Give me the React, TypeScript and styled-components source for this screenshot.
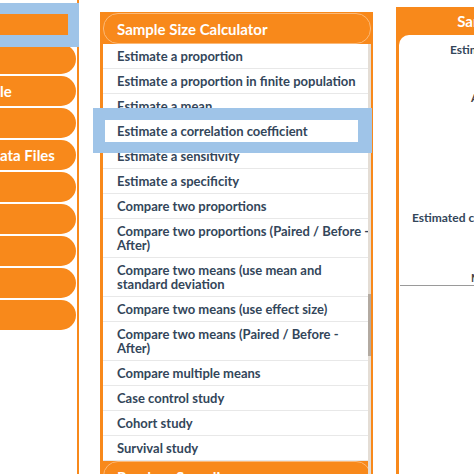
import React from 'react';
import styled, {createGlobalStyle} from 'styled-components';

const ORANGE = '#f8891b';
const INK = '#33465a';
const NOTE_BLUE = '#9fc4e8';

type Row = {label: React.ReactNode};

const rows: Row[] = [
  {label: 'Estimate a proportion'},
  {label: 'Estimate a proportion in finite population'},
  {label: 'Estimate a mean'},
  {label: 'Estimate a correlation coefficient'},
  {label: 'Estimate a sensitivity'},
  {label: 'Estimate a specificity'},
  {label: 'Compare two proportions'},
  {label: <>Compare two proportions (Paired / Before -<br />After)</>},
  {label: <>Compare two means (use mean and<br />standard deviation</>},
  {label: 'Compare two means (use effect size)'},
  {label: <>Compare two means (Paired / Before -<br />After)</>},
  {label: 'Compare multiple means'},
  {label: 'Case control study'},
  {label: 'Cohort study'},
  {label: 'Survival study'},
];

const menuLabels = ['', 'le', '', 'ata Files', '', '', '', '', ''];

function App() {
  return (
    <>
      <GlobalStyle />
      <Page>
        {/* left phone, mostly off screen */}
        <MenuPanel>
          <NoteBox>
            <MenuTitleBar />
          </NoteBox>
          {menuLabels.map((l, i) => (
            <MenuPill key={i}>{l}</MenuPill>
          ))}
        </MenuPanel>

        {/* middle phone */}
        <ListPanel>
          <SectionHeader>Sample Size Calculator</SectionHeader>
          <List>
            {rows.map((r, i) => (
              <ListRow key={i}>{r.label}</ListRow>
            ))}
          </List>
          <SectionHeader>Random Sampling</SectionHeader>
          <ScrollTrack>
            <ScrollThumb />
          </ScrollTrack>
          <Highlight>
            <HighlightInner>Estimate a correlation coefficient</HighlightInner>
          </Highlight>
        </ListPanel>

        {/* right phone */}
        <FormPanel>
          <FormHeader>Sample Size Calculator</FormHeader>
          <FormCard>
            <FormTitle $indent={51}>Estimate a correlation coefficient</FormTitle>
            <FieldLabel $indent={72} $gap={34}>Alpha</FieldLabel>
            <FormTitle $indent={13} $gap={106}>Estimated correlation coefficient</FormTitle>
            <FieldLabel $indent={72} $gap={46}>Margin of error</FieldLabel>
            <Underline />
          </FormCard>
        </FormPanel>
      </Page>
    </>
  );
}

const GlobalStyle = createGlobalStyle`
  html, body {
    margin: 0;
    padding: 0;
    background: #ffffff;
    overflow: hidden;
  }
  body {
    font-family: Lato, "Open Sans", sans-serif;
  }
`;

const Page = styled.div`
  display: flex;
  align-items: flex-start;
  width: 474px;
  height: 474px;
  overflow: hidden;
  background: #ffffff;
`;

const MenuPanel = styled.div`
  flex: none;
  display: flex;
  flex-direction: column;
  gap: 2px;
  width: 77px;
  height: 474px;
  padding-top: 3px;
  box-sizing: content-box;
  border-right: 2px solid ${ORANGE};
`;

const NoteBox = styled.div`
  position: relative;
  z-index: 1;
  height: 44px;
  margin-right: -2px;
  margin-bottom: -5px;
  padding: 11px 11px 0 0;
  box-sizing: border-box;
  background: ${NOTE_BLUE};
`;

const MenuTitleBar = styled.div`
  height: 21px;
  background: ${ORANGE};
`;

const MenuPill = styled.div`
  flex: none;
  display: flex;
  align-items: center;
  width: 76px;
  height: 30px;
  border-radius: 0 15px 15px 0;
  background: ${ORANGE};
  color: #ffffff;
  font-size: 15px;
  font-weight: 700;
  white-space: nowrap;
  overflow: hidden;
`;

const ListPanel = styled.div`
  position: relative;
  flex: none;
  display: flex;
  flex-direction: column;
  width: 268px;
  margin: 12px 0 0 21px;
  padding-top: 1px;
  background: ${ORANGE};
  border-left: 3px solid ${ORANGE};
  border-right: 2px solid ${ORANGE};
`;

const SectionHeader = styled.div`
  display: flex;
  align-items: center;
  height: 31px;
  padding-left: 13px;
  box-sizing: border-box;
  border: 1px solid #fbb978;
  border-radius: 15px;
  background: ${ORANGE};
  color: #ffffff;
  font-size: 15px;
  font-weight: 700;
`;

const List = styled.div`
  display: flex;
  flex-direction: column;
  background: #ffffff;
`;

const ListRow = styled.div`
  padding: 5px 14px;
  border-bottom: 1px solid #e8e8e8;
  color: ${INK};
  font-size: 13px;
  font-weight: 700;
  line-height: 14px;
  white-space: nowrap;
`;

const ScrollTrack = styled.div`
  position: absolute;
  top: 32px;
  right: 0;
  bottom: 0;
  width: 3px;
  background: #e4ddd5;
`;

const ScrollThumb = styled.div`
  margin-top: 250px;
  height: 62px;
  background: #b3aaa1;
`;

const Highlight = styled.div`
  position: absolute;
  left: -10px;
  top: 96px;
  width: 279px;
  height: 45px;
  padding: 12px 14px 11px 12px;
  box-sizing: border-box;
  background: ${NOTE_BLUE};
`;

const HighlightInner = styled.div`
  display: flex;
  align-items: center;
  height: 100%;
  padding-left: 12px;
  background: #ffffff;
  color: ${INK};
  font-size: 13px;
  font-weight: 700;
  white-space: nowrap;
`;

const FormPanel = styled.div`
  flex: none;
  display: flex;
  flex-direction: column;
  width: 273px;
  height: 467px;
  margin: 7px 0 0 23px;
  background: ${ORANGE};
`;

const FormHeader = styled.div`
  display: flex;
  align-items: center;
  justify-content: center;
  height: 28px;
  color: #ffffff;
  font-size: 15px;
  font-weight: 700;
`;

const FormCard = styled.div`
  flex: 1;
  display: flex;
  flex-direction: column;
  margin-left: 3px;
  border-top-left-radius: 10px;
  background: #ffffff;
`;

const FormTitle = styled.div<{$indent: number; $gap?: number}>`
  margin-top: ${({$gap}) => $gap ?? 8}px;
  padding-left: ${({$indent}) => $indent}px;
  color: ${INK};
  font-size: 12px;
  font-weight: 700;
  line-height: 14px;
  white-space: nowrap;
`;

const FieldLabel = styled.div<{$indent: number; $gap: number}>`
  margin-top: ${({$gap}) => $gap}px;
  padding-left: ${({$indent}) => $indent}px;
  color: #444;
  font-size: 11px;
  font-weight: 700;
  line-height: 14px;
  white-space: nowrap;
`;

const Underline = styled.div`
  height: 1px;
  margin: 0 0 0 1px;
  background: #9a9a9a;
`;

export default App;
